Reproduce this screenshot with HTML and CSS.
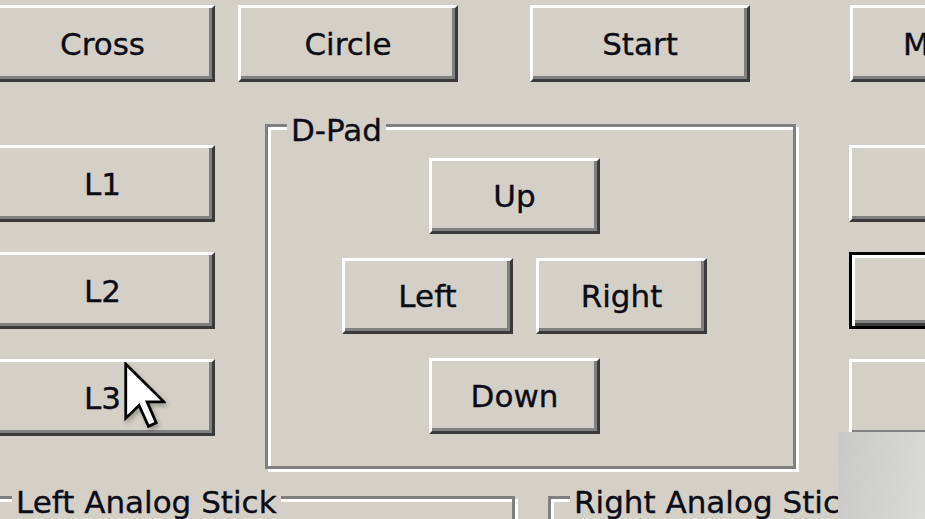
FILE: index.html
```html
<!DOCTYPE html>
<html lang="en">
<head>
<meta charset="utf-8">
<title>Pad configuration</title>
<link rel="stylesheet" href="styles.css">
</head>
<body>
<div class="dialog">
  <div class="row row-top">
    <div class="btn btn-edge">Cross</div>
    <div class="btn btn-std gap-circle">Circle</div>
    <div class="btn btn-std gap-start">Start</div>
    <div class="btn btn-std btn-offside gap-mouse">Mouse</div>
  </div>

  <div class="row row-mid">
    <div class="side side-left">
      <div class="btn btn-edge">L1</div>
      <div class="btn btn-edge">L2</div>
      <div class="btn btn-edge">L3</div>
    </div>

    <div class="group dpad">
      <span class="group-label">D-Pad</span>
      <div class="dpad-body">
        <div class="btn btn-dpad dpad-indent">Up</div>
        <div class="dpad-pair">
          <div class="btn btn-dpad">Left</div>
          <div class="btn btn-dpad">Right</div>
        </div>
        <div class="btn btn-dpad dpad-indent">Down</div>
      </div>
    </div>

    <div class="side side-right">
      <div class="btn btn-std"></div>
      <div class="btn btn-std btn-default"></div>
      <div class="btn btn-std"></div>
    </div>
  </div>

  <div class="row row-bottom">
    <div class="group analog-left">
      <span class="group-label">Left Analog Stick</span>
    </div>
    <div class="group analog-right">
      <span class="group-label">Right Analog Stick</span>
    </div>
  </div>

  <div class="video-patch"></div>

  <svg class="cursor" viewBox="0 0 12 19" width="42" height="67" aria-hidden="true">
    <polygon points="0.5,0.5 0.5,16 4.3,12.3 7,18.3 9.2,17.3 6.6,11.3 11.4,11.3" fill="#fff" stroke="#000" stroke-width="0.8" stroke-linejoin="miter"/>
  </svg>
</div>
</body>
</html>
```

FILE: styles.css
```css
html, body {
  margin: 0;
  padding: 0;
  background: #d4d0c8;
}

body {
  width: 925px;
  height: 519px;
  overflow: hidden;
}

.dialog {
  position: relative;
  width: 925px;
  height: 519px;
  overflow: hidden;
  background: #d4d0c8;
  font-family: "DejaVu Sans", "Liberation Sans", sans-serif;
  font-size: 31px;
  color: #0c0c16;
  -webkit-text-stroke: 0.35px #0c0c16;
}

.row {
  display: flex;
  align-items: flex-start;
  margin-left: -10px;
}

.row-top {
  padding-top: 5px;
}

.row-mid {
  margin-top: 42px;
}

.row-bottom {
  margin-top: 27px;
}

/* classic 3D push button */
.btn {
  box-sizing: border-box;
  flex-shrink: 0;
  display: flex;
  align-items: center;
  justify-content: center;
  height: 77px;
  background: #d4d0c8;
  border: 3px solid;
  border-color: #ffffff #3a3a3a #3a3a3a #ffffff;
  box-shadow: inset -3px -3px 0 #808080;
  white-space: nowrap;
}

.btn-edge {
  width: 225px;
}

.btn-std {
  width: 220px;
}

/* button running past the right edge: its caption starts where the reference shows it */
.btn-offside {
  justify-content: flex-start;
  padding-left: 50px;
}

.gap-circle {
  margin-left: 23px;
}

.gap-start {
  margin-left: 72px;
}

.gap-mouse {
  margin-left: 100px;
}

.btn-default {
  border-color: #000;
  box-shadow: inset 3px 3px 0 #ffffff, inset -3px -3px 0 #3a3a3a, inset -6px -6px 0 #808080;
}

.side {
  display: flex;
  flex-direction: column;
  gap: 30px;
  padding-top: 21px;
  flex-shrink: 0;
}

.side-right {
  margin-left: 53px;
}

/* etched group box */
.group {
  position: relative;
  box-sizing: border-box;
  flex-shrink: 0;
  border: 3px solid #808080;
  box-shadow: inset 3px 3px 0 #ffffff, 3px 3px 0 #ffffff;
}

.group-label {
  position: absolute;
  top: -12px;
  left: 19px;
  padding: 0 4px;
  line-height: 1;
  background: #d4d0c8;
  white-space: nowrap;
}

.dpad {
  margin-left: 50px;
  width: 531px;
  height: 345px;
  padding: 31px 0 0 74px;
}

.dpad-body {
  display: flex;
  flex-direction: column;
  gap: 24px;
}

.dpad-pair {
  display: flex;
  gap: 23px;
}

.btn-dpad {
  width: 171px;
  height: 76px;
}

.dpad-indent {
  margin-left: 87px;
}

.analog-left {
  width: 525px;
  height: 120px;
}

.analog-right {
  margin-left: 33px;
  width: 500px;
  height: 120px;
}

/* lighter patch from the video overlay in the lower-right corner */
.video-patch {
  position: absolute;
  left: 838px;
  top: 432px;
  width: 87px;
  height: 87px;
  background: linear-gradient(100deg, #c9c9c8 0%, #d3d3d2 60%, #dadad9 100%);
}

.cursor {
  position: absolute;
  left: 124px;
  top: 362px;
  -webkit-text-stroke: 0;
  filter: drop-shadow(2px 3px 2px rgba(0, 0, 0, 0.25));
}
```
